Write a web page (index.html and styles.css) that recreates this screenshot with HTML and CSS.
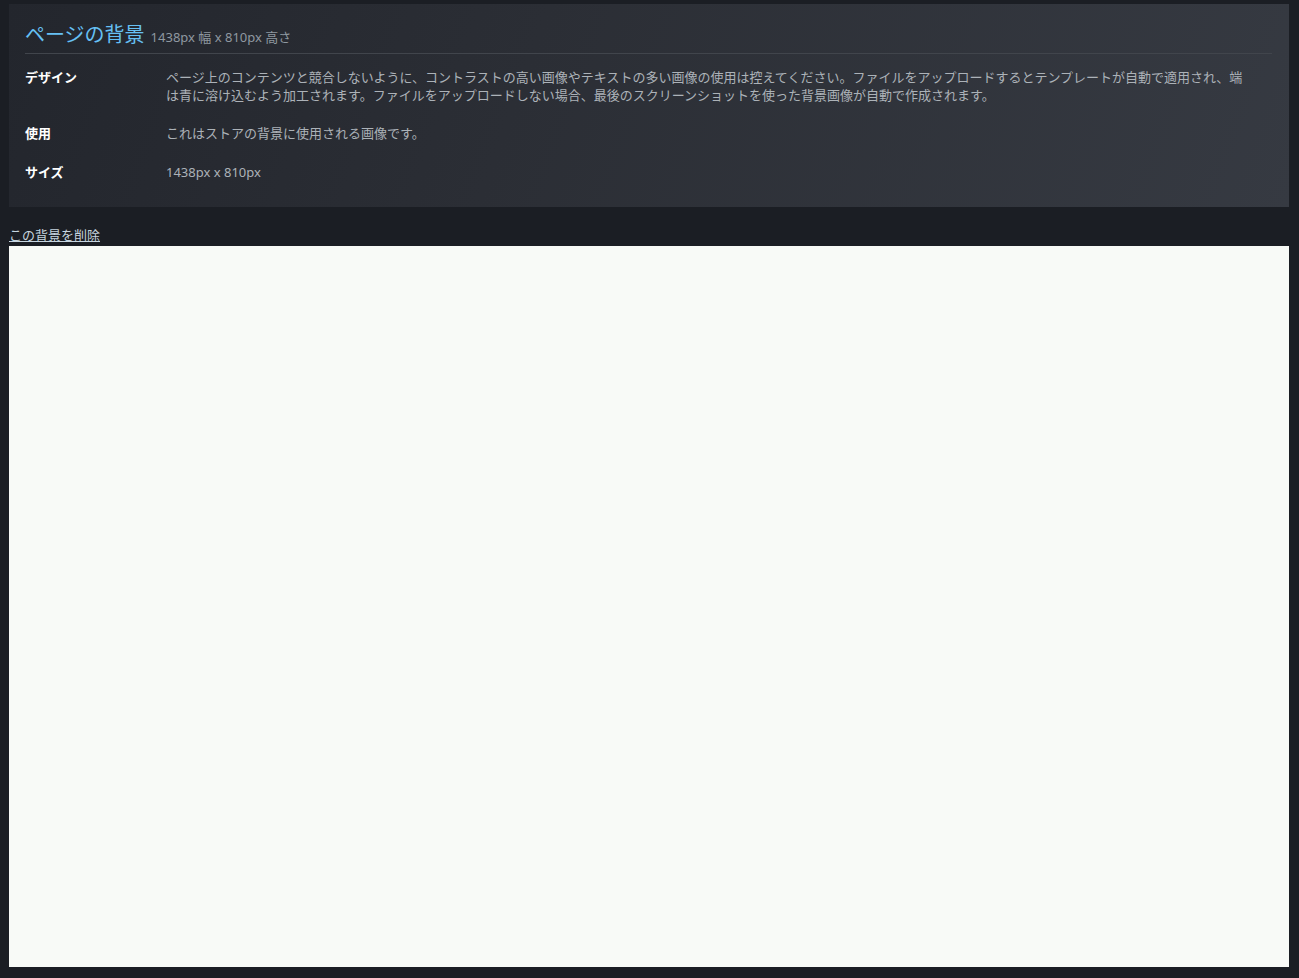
FILE: index.html
```html
<!DOCTYPE html>
<html lang="ja">
<head>
    <meta charset="UTF-8">
    <title>ページの背景</title>
    <link rel="stylesheet" href="styles.css">
</head>
<body>
    <div class="bg-panel">
        <div class="panel-header">
            <span class="panel-title">ページの背景</span>
            <span class="panel-dims">1438px 幅 x 810px 高さ</span>
        </div>

        <div class="info-row">
            <div class="info-label">デザイン</div>
            <div class="info-value">ページ上のコンテンツと競合しないように、コントラストの高い画像やテキストの多い画像の使用は控えてください。ファイルをアップロードするとテンプレートが自動で適用され、端は青に溶け込むよう加工されます。ファイルをアップロードしない場合、最後のスクリーンショットを使った背景画像が自動で作成されます。</div>
        </div>
        <div class="info-row">
            <div class="info-label">使用</div>
            <div class="info-value">これはストアの背景に使用される画像です。</div>
        </div>
        <div class="info-row info-row-last">
            <div class="info-label">サイズ</div>
            <div class="info-value">1438px x 810px</div>
        </div>
    </div>

    <a class="remove-link" href="#">この背景を削除</a>
    <div class="bg-preview"></div>
</body>
</html>
```

FILE: styles.css
```css
* {
    margin: 0;
    padding: 0;
    box-sizing: border-box;
}

body {
    font-family: "Noto Sans", "Noto Sans CJK JP", sans-serif;
    font-size: 13px;
    background: #1b1e24;
    color: #acb2b8;
    padding: 4px 10px 11px 9px;
}

.bg-panel {
    background: linear-gradient(110deg, #23262d 0%, #2b2e35 40%, #363a42 100%);
    padding: 18px 17px 18px 16px;
    height: 203px;
}

.panel-header {
    display: flex;
    align-items: baseline;
    gap: 6px;
    padding-bottom: 5px;
    border-bottom: 1px solid #41454c;
    margin-bottom: 14px;
}

.panel-title {
    font-size: 20px;
    color: #66c0f4;
    line-height: 26px;
}

.panel-dims {
    font-size: 13px;
    color: #8f98a0;
}

.info-row {
    display: flex;
    line-height: 18px;
    margin-bottom: 20px;
}

.info-row-last {
    padding-top: 1px;
}

.info-label {
    width: 141px;
    flex-shrink: 0;
    font-weight: bold;
    color: #ffffff;
}

.info-value {
    flex: 1;
    padding-right: 20px;
}

.remove-link {
    display: block;
    margin-top: 18px;
    line-height: 21px;
    color: #c6d4df;
    text-decoration: underline;
}

.remove-link:hover {
    color: #ffffff;
}

.bg-preview {
    background: #f8faf7;
    height: 721px;
}
```
